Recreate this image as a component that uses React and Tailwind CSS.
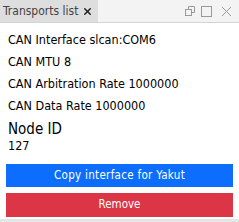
import { X } from 'lucide-react'

const FONT = { fontFamily: '"DejaVu Sans Condensed", "DejaVu Sans", sans-serif' }

const ROWS = [
  'CAN Interface slcan:COM6',
  'CAN MTU 8',
  'CAN Arbitration Rate 1000000',
  'CAN Data Rate 1000000',
]

export default function App() {
  return (
    <div className="w-[239px] h-[222px] bg-white flex flex-col overflow-hidden text-black" style={FONT}>
      {/* tab bar */}
      <div className="h-[23px] flex bg-[#f3f3f3] border-b border-[#d4d4d4]">
        <div className="flex items-center gap-[4px] pl-[3px] pr-[5px] bg-[#dedede] text-[12px] text-[#444]">
          <span>Transports list</span>
          <X size={11} strokeWidth={3.2} className="text-[#222]" />
        </div>
        <div className="flex-1" />
        <div className="flex items-center gap-[6px] pr-[4px] text-[#999]">
          <svg width="10" height="10" viewBox="0 0 10 10" fill="none" stroke="currentColor">
            <rect x="0.5" y="3.5" width="6" height="6" />
            <path d="M3.5 3.5V0.5H9.5V6.5H6.5" />
          </svg>
          <svg width="11" height="11" viewBox="0 0 11 11" fill="none" stroke="currentColor">
            <rect x="0.5" y="0.5" width="10" height="10" />
          </svg>
          <X size={17} strokeWidth={1.4} />
        </div>
      </div>

      <div className="flex flex-col px-[8px] pt-[6px] text-[12.5px]">
        {ROWS.map(r => (
          <div key={r} className="h-[22px] leading-[22px]">{r}</div>
        ))}
        <div className="text-[15px] leading-[18px] mt-[3px]">Node ID</div>
        <div className="text-[12.5px] leading-[16px]">127</div>
      </div>

      <div className="flex flex-col gap-[6px] px-[6px] mt-[10px]">
        <button className="h-[23px] bg-[#0d6efd] text-white text-[11.5px] tracking-[0.3px]">Copy interface for Yakut</button>
        <button className="h-[24px] bg-[#dc3545] text-white text-[11.5px]">Remove</button>
      </div>
      <div className="flex-1" />
      <div className="h-[3px] bg-[#e5e5e5]" />
    </div>
  )
}
